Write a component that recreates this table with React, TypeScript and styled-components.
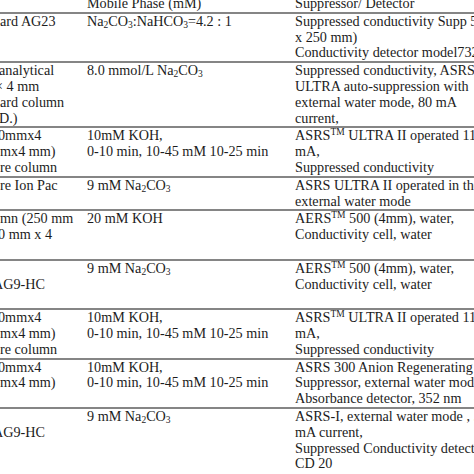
import React from "react";
import styled, { createGlobalStyle } from "styled-components";

const GlobalStyle = createGlobalStyle`
  html, body {
    margin: 0;
    padding: 0;
    background: #ffffff;
  }
  body {
    width: 474px;
    height: 474px;
    overflow: hidden;
  }
`;

const Page = styled.div`
  width: 474px;
  height: 474px;
  overflow: hidden;
  font-family: "Liberation Serif", "Times New Roman", serif;
  font-size: 14.2px;
  line-height: 15.8px;
  color: #1c1c1c;
  background: #ffffff;
`;
const RowBase = styled.div`
  display: grid;
  grid-template-columns: 87px 208px 1fr;
`;
const HeaderRow = styled(RowBase)`
  margin-top: -4px;
  height: 15.8px;
`;
const Row = styled(RowBase)<{ $lines: number }>`
  border-top: 2px solid #858585;
  min-height: ${(p) => p.$lines * 15.8}px;
`;
const Cell = styled.div`
  display: flex;
  flex-direction: column;
  min-width: 0;
  overflow: hidden;
`;
const Line = styled.div<{ $shift?: number }>`
  white-space: nowrap;
  height: 15.8px;
  margin-left: ${(p) => p.$shift ?? 0}px;
`;
const Sub = styled.sub`
  font-size: 9.5px;
  line-height: 0;
  vertical-align: -2px;
`;
const Sup = styled.sup`
  font-size: 9.5px;
  line-height: 0;
  vertical-align: 5px;
`;

type CellLines = { text: React.ReactNode; shift?: number }[];

interface RowData {
  lines: number;
  cells: [CellLines, CellLines, CellLines];
}

const Na2CO3 = () => (
  <>
    Na<Sub>2</Sub>CO<Sub>3</Sub>
  </>
);

const kohGradient: CellLines = [
  { text: "10mM KOH," },
  { text: "0-10 min, 10-45 mM 10-25 min" },
];

const ultraTwo: CellLines = [
  {
    text: (
      <>
        ASRS<Sup>TM</Sup> ULTRA II operated 112
      </>
    ),
  },
  { text: "mA," },
  { text: "Suppressed conductivity" },
];

const aers: CellLines = [
  {
    text: (
      <>
        AERS<Sup>TM</Sup> 500 (4mm), water,
      </>
    ),
  },
  { text: "Conductivity cell, water" },
];

const nineCarbonate: CellLines = [
  {
    text: (
      <>
        9 mM <Na2CO3 />
      </>
    ),
  },
];

const rows: RowData[] = [
  {
    lines: 3,
    cells: [
      [{ text: "ard AG23" }],
      [
        {
          text: (
            <>
              Na<Sub>2</Sub>CO<Sub>3</Sub>:NaHCO<Sub>3</Sub>=4.2 : 1
            </>
          ),
        },
      ],
      [
        { text: "Suppressed conductivity Supp 5 (4" },
        { text: "x 250 mm)" },
        { text: "Conductivity detector model732" },
      ],
    ],
  },
  {
    lines: 4,
    cells: [
      [
        { text: "analytical", shift: -1 },
        { text: "× 4 mm", shift: -5 },
        { text: "ard column" },
        { text: "D.)", shift: -1 },
      ],
      [
        {
          text: (
            <>
              8.0 mmol/L <Na2CO3 />
            </>
          ),
        },
      ],
      [
        { text: "Suppressed conductivity, ASRS" },
        { text: "ULTRA auto-suppression with" },
        { text: "external water mode, 80 mA" },
        { text: "current," },
      ],
    ],
  },
  {
    lines: 3,
    cells: [
      [{ text: "0mmx4", shift: -2 }, { text: "mx4 mm)" }, { text: "re column" }],
      kohGradient,
      ultraTwo,
    ],
  },
  {
    lines: 2,
    cells: [
      [{ text: "re Ion Pac" }],
      nineCarbonate,
      [{ text: "ASRS ULTRA II operated in the" }, { text: "external water mode" }],
    ],
  },
  {
    lines: 3,
    cells: [
      [{ text: "mn (250 mm" }, { text: "0 mm x 4", shift: -2 }],
      [{ text: "20 mM KOH" }],
      aers,
    ],
  },
  {
    lines: 3,
    cells: [[{ text: "" }, { text: "AG9-HC", shift: -7 }], nineCarbonate, aers],
  },
  {
    lines: 3,
    cells: [
      [{ text: "0mmx4", shift: -2 }, { text: "mx4 mm)" }, { text: "re column" }],
      kohGradient,
      ultraTwo,
    ],
  },
  {
    lines: 3,
    cells: [
      [{ text: "0mmx4", shift: -2 }, { text: "mx4 mm)" }],
      kohGradient,
      [
        { text: "ASRS 300 Anion Regenerating" },
        { text: "Suppressor, external water mode" },
        { text: "Absorbance detector, 352 nm" },
      ],
    ],
  },
  {
    lines: 4,
    cells: [
      [{ text: "" }, { text: "AG9-HC", shift: -7 }],
      nineCarbonate,
      [
        { text: "ASRS-I, external water mode , 50" },
        { text: "mA current," },
        { text: "Suppressed Conductivity detector" },
        { text: "CD 20" },
      ],
    ],
  },
];

export default function App() {
  return (
    <>
      <GlobalStyle />
      <Page>
        <HeaderRow>
          <Cell />
          <Cell>
            <Line>Mobile Phase (mM)</Line>
          </Cell>
          <Cell>
            <Line>Suppressor/ Detector</Line>
          </Cell>
        </HeaderRow>
        {rows.map((row, index) => (
          <Row key={index} $lines={row.lines}>
            {row.cells.map((cell, ci) => (
              <Cell key={ci}>
                {cell.map((line, li) => (
                  <Line key={li} $shift={line.shift ?? 0}>
                    {line.text || "\u00a0"}
                  </Line>
                ))}
              </Cell>
            ))}
          </Row>
        ))}
      </Page>
    </>
  );
}
